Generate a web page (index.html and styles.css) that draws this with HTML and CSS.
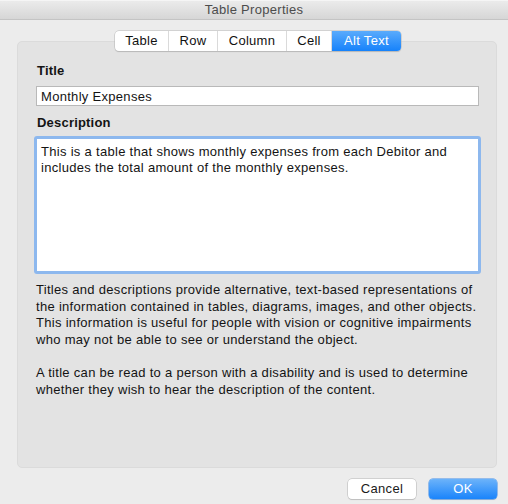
FILE: index.html
```html
<!DOCTYPE html>
<html>
<head>
<meta charset="utf-8">
<link rel="stylesheet" href="styles.css">
</head>
<body>
<div class="window">
  <div class="titlebar">Table Properties</div>
  <div class="content">
    <div class="tabs">
      <div class="tab t-table">Table</div>
      <div class="tab t-row">Row</div>
      <div class="tab t-col">Column</div>
      <div class="tab t-cell">Cell</div>
      <div class="tab t-alt active">Alt Text</div>
    </div>
    <div class="group">
      <div class="label first">Title</div>
      <div class="input">Monthly Expenses</div>
      <div class="label">Description</div>
      <div class="textarea">This is a table that shows monthly expenses from each Debitor and includes the total amount of the monthly expenses.</div>
      <p class="help">Titles and descriptions provide alternative, text-based representations of the information contained in tables, diagrams, images, and other objects. This information is useful for people with vision or cognitive impairments who may not be able to see or understand the object.</p>
      <p class="help">A title can be read to a person with a disability and is used to determine whether they wish to hear the description of the content.</p>
    </div>
    <div class="buttons">
      <div class="btn cancel">Cancel</div>
      <div class="btn ok">OK</div>
    </div>
  </div>
</div>
</body>
</html>
```
FILE: styles.css
```css
html, body {
  margin: 0;
  padding: 0;
}
body {
  background: #ececec;
  font-family: "Liberation Sans", Arial, sans-serif;
  font-size: 13px;
  letter-spacing: 0.3px;
  color: #141414;
  width: 508px;
  height: 504px;
  overflow: hidden;
}
.window {
  display: flex;
  flex-direction: column;
  height: 504px;
}
.titlebar {
  box-sizing: border-box;
  height: 20px;
  line-height: 18px;
  text-align: center;
  color: #4c4c4c;
  font-size: 13px;
  background: linear-gradient(#ebebeb, #d6d6d6);
  border-top: 1px solid #f5f5f5;
  border-bottom: 1px solid #c4c4c4;
}
.content {
  padding: 11px 11px 0 17px;
  display: flex;
  flex-direction: column;
}
.tabs {
  display: flex;
  align-self: flex-start;
  margin-left: 98px;
  height: 20px;
  border-radius: 4px;
  background: #fff;
  box-shadow: 0 0 0 0.5px #b8b8b8, 0 1px 1px rgba(0,0,0,0.18);
  position: relative;
  z-index: 2;
  margin-bottom: -10px;
}
.tab {
  height: 20px;
  line-height: 20px;
  text-align: center;
  color: #111;
  border-right: 1px solid #dadada;
  box-sizing: border-box;
}
.t-table { width: 54px; }
.t-row { width: 49px; }
.t-col { width: 69px; }
.t-cell { width: 45px; }
.t-alt { width: 69px; border-right: none; }
.tab.active {
  background: linear-gradient(#5aabfc, #1682fb);
  color: #fff;
  border-radius: 0 4px 4px 0;
}
.group {
  width: 480px;
  height: 427px;
  box-sizing: border-box;
  background: #e3e3e3;
  border: 1px solid #dbdbdb;
  border-radius: 5px;
  padding: 21px 18px 0 18px;
}
.label {
  font-weight: bold;
  height: 16px;
  line-height: 16px;
  margin-top: 9px;
  margin-left: 1px;
  letter-spacing: 0.2px;
}
.label.first { margin-top: 0; }
.input {
  margin-top: 7px;
  height: 20px;
  line-height: 19px;
  background: #fff;
  border: 1px solid #b9b9b9;
  box-sizing: border-box;
  padding: 0 4px;
  width: 443px;
}
.textarea {
  margin-top: 5px;
  margin-left: -2px;
  width: 447px;
  height: 138px;
  box-sizing: border-box;
  background: #fff;
  border: 3px solid #8db8ee;
  border-radius: 3px;
  padding: 5px 4px;
  line-height: 16px;
}
.help {
  margin: 8px 0 0 0;
  line-height: 16.67px;
  width: 450px;
}
.help + .help {
  margin-top: 16.67px;
}
.buttons {
  display: flex;
  justify-content: flex-end;
  gap: 13px;
  margin-top: 11px;
}
.btn {
  width: 68px;
  height: 20px;
  line-height: 20px;
  text-align: center;
  border-radius: 4px;
  box-sizing: border-box;
}
.cancel {
  background: #fff;
  color: #1a1a1a;
  box-shadow: 0 0 0 0.5px #b5b5b5, 0 1px 1px rgba(0,0,0,0.15);
}
.ok {
  background: linear-gradient(#6cb3fa, #1a84fb);
  color: #fff;
  box-shadow: 0 0 0 0.5px #3e8ce9, 0 1px 1px rgba(0,0,0,0.15);
}
```
